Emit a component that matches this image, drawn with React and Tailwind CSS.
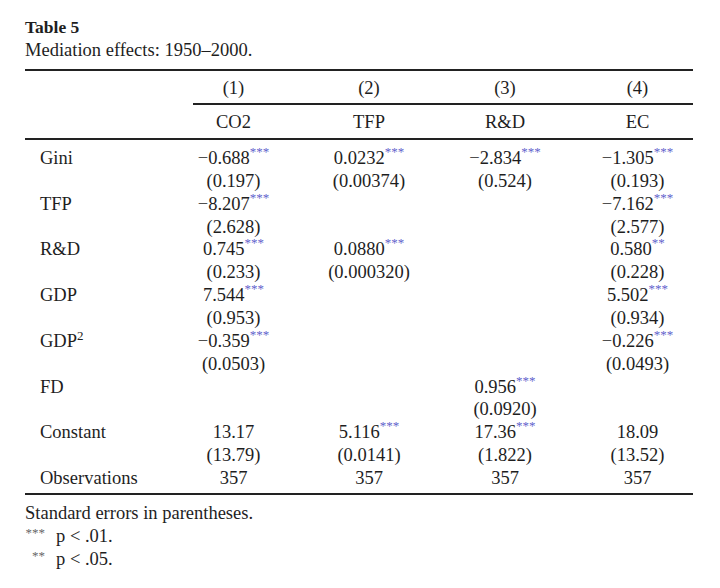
import React from 'react';

const rows = [
  ['Gini', ['−0.688', '***'], ['0.0232', '***'], ['−2.834', '***'], ['−1.305', '***']],
  ['', '(0.197)', '(0.00374)', '(0.524)', '(0.193)'],
  ['TFP', ['−8.207', '***'], '', '', ['−7.162', '***']],
  ['', '(2.628)', '', '', '(2.577)'],
  ['R&D', ['0.745', '***'], ['0.0880', '***'], '', ['0.580', '**']],
  ['', '(0.233)', '(0.000320)', '', '(0.228)'],
  ['GDP', ['7.544', '***'], '', '', ['5.502', '***']],
  ['', '(0.953)', '', '', '(0.934)'],
  ['GDP2', ['−0.359', '***'], '', '', ['−0.226', '***']],
  ['', '(0.0503)', '', '', '(0.0493)'],
  ['FD', '', '', ['0.956', '***'], ''],
  ['', '', '', '(0.0920)', ''],
  ['Constant', '13.17', ['5.116', '***'], ['17.36', '***'], '18.09'],
  ['', '(13.79)', '(0.0141)', '(1.822)', '(13.52)'],
  ['Observations', '357', '357', '357', '357'],
];

const grid = 'grid grid-cols-[141px_135px_136px_136px_120px]';

const Stars = ({ s }) => (
  <span className="relative top-[-8px] text-[13px] leading-none text-[#6262cc]">{s}</span>
);

const Cell = ({ v, last }) => {
  const pad = last ? 'pl-[9px]' : '';
  if (Array.isArray(v)) {
    return (
      <div className={`text-center whitespace-nowrap ${pad}`}>
        {v[0]}
        <Stars s={v[1]} />
      </div>
    );
  }
  return <div className={`text-center whitespace-nowrap ${pad}`}>{v}</div>;
};

const Label = ({ text }) => {
  if (text === 'GDP2') {
    return (
      <div className="pl-[15px]">
        GDP<span className="relative top-[-7px] text-[13px] leading-none">2</span>
      </div>
    );
  }
  return <div className="pl-[15px]">{text}</div>;
};

export default function App() {
  return (
    <div
      className="w-[720px] h-[588px] bg-white text-[#1e1e1e] px-[25px] pt-[16px] overflow-hidden"
      style={{ fontFamily: '"Liberation Serif", serif' }}
    >
      <div className="w-[668px]">
        <div className="text-[17.5px] font-bold leading-[23px]">Table 5</div>
        <div className="text-[18.5px] leading-[23px]">Mediation effects: 1950–2000.</div>

        <div className="mt-[7px] text-[18.5px] leading-[22.86px]">
          <div className="h-[2px] bg-[#222]" />
          <div className={`${grid} h-[32px] items-center pt-[3px]`}>
            <div />
            <Cell v="(1)" />
            <Cell v="(2)" />
            <Cell v="(3)" />
            <Cell v="(4)" last />
          </div>
          <div className="ml-[168px] h-[2px] bg-[#222]" />
          <div className={`${grid} h-[33px] items-center pt-[2px]`}>
            <div />
            <Cell v="CO2" />
            <Cell v="TFP" />
            <Cell v="R&D" />
            <Cell v="EC" last />
          </div>
          <div className="h-[2px] bg-[#222]" />
          <div className="pt-[7px] pb-[3px]">
            {rows.map((r, i) => (
              <div key={i} className={grid}>
                <Label text={r[0]} />
                <Cell v={r[1]} />
                <Cell v={r[2]} />
                <Cell v={r[3]} />
                <Cell v={r[4]} last />
              </div>
            ))}
          </div>
          <div className="h-[2px] bg-[#222]" />
        </div>

        <div className="pt-[7px] text-[18.5px] leading-[22.86px]">
          <div>Standard errors in parentheses.</div>
          <div className="flex">
            <span className="w-[20px] text-right text-[13px] text-[#666] relative top-[-3px]">***</span>
            <span className="ml-[11px]">p &lt; .01.</span>
          </div>
          <div className="flex">
            <span className="w-[20px] text-right text-[13px] text-[#666] relative top-[-3px]">**</span>
            <span className="ml-[11px]">p &lt; .05.</span>
          </div>
        </div>
      </div>
    </div>
  );
}
